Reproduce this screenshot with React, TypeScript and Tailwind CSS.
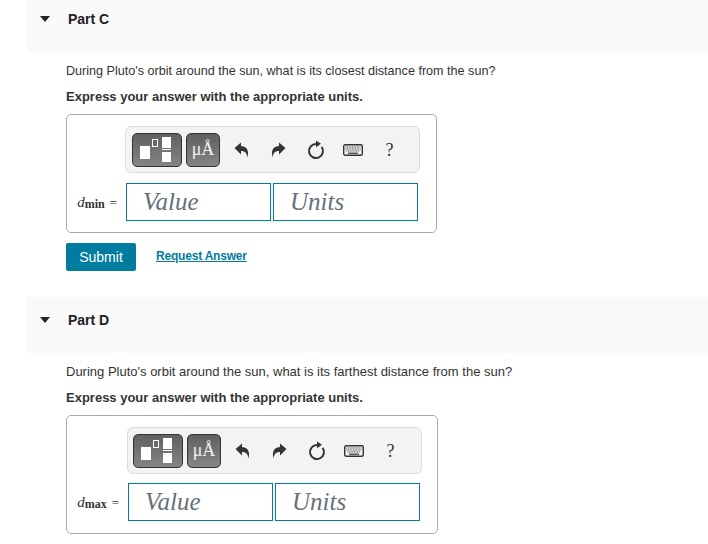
import React from "react";

const Tool = ({ children, w }: { children: React.ReactNode; w: string }) => (
  <div className={`flex justify-center items-center w-[37px] ${w}`}>{children}</div>
);

function Toolbar({ pad }: { pad: string }) {
  return (
    <div className={`flex items-center h-[47px] w-[295px] bg-[#f3f3f3] border border-[#dddddd] rounded-[6px] ${pad}`}>
      <div className="relative w-[50px] h-[34px] rounded-[5px] border border-[#333333] bg-gradient-to-b from-[#606060] to-[#858585]">
        <div className="absolute left-[7px] top-[12px] w-[10px] h-[13px] bg-white" />
        <div className="absolute left-[19px] top-[5px] w-[6px] h-[8px] border border-white" />
        <div className="absolute left-[29px] top-[3px] w-[9px] h-[11px] bg-white" />
        <div className="absolute left-[29px] top-[15px] w-[9px] h-px bg-white" />
        <div className="absolute left-[29px] top-[18px] w-[9px] h-[10px] bg-white" />
      </div>
      <div className="ml-[4px] w-[34px] h-[34px] rounded-[5px] border border-[#333333] bg-gradient-to-b from-[#606060] to-[#858585] flex items-center justify-center text-[#f2f2f2] text-[18px] font-['Liberation_Serif',serif]">
        μÅ
      </div>
      <Tool w="ml-[3px]">
        <svg width="15" height="16" viewBox="0 0 15 16">
          <path d="M0.500 6 7 0.500v3.500c4.500 0.200 7.500 3 7 8.500l-0.700 3c-0.300-4.500-2.300-6.500-6.300-6.500V12.500z" fill="#333333" />
        </svg>
      </Tool>
      <Tool w="">
        <svg width="15" height="16" viewBox="0 0 15 16">
          <path d="M14.500 6 8 0.500v3.500c-4.500 0.200-7.500 3-7 8.500l0.700 3c0.300-4.500 2.300-6.500 6.300-6.500V12.500z" fill="#333333" />
        </svg>
      </Tool>
      <Tool w="">
        <svg width="18" height="20" viewBox="0 0 18 20">
          <path d="M9 4a7 7 0 1 0 5.600 2.800" fill="none" stroke="#333333" strokeWidth="2" />
          <path d="M9 0.500 14 3.800 9 7.200z" fill="#333333" />
        </svg>
      </Tool>
      <Tool w="">
        <svg width="20" height="12" viewBox="0 0 20 12">
          <rect x="0.700" y="0.700" width="18.600" height="10.600" rx="1.500" fill="#f3f3f3" stroke="#333333" strokeWidth="1.400" />
          <path d="M2.500 3h15M2.500 5h15M3.500 7h13" stroke="#444444" strokeWidth="1.200" strokeDasharray="1 .6" />
          <path d="M5 9.200h10" stroke="#333333" strokeWidth="1.200" />
        </svg>
      </Tool>
      <Tool w="">
        <span className="text-[18px] leading-none text-[#333333] font-['Liberation_Serif',serif]">?</span>
      </Tool>
    </div>
  );
}

function Field({ text, w }: { text: string; w: string }) {
  return (
    <div className={`${w} h-[38px] border border-[#007c9e] bg-white flex items-center pl-[16px] text-[25px] italic text-[#66707a] font-['Liberation_Serif',serif]`}>
      {text}
    </div>
  );
}

function AnswerBox({ sub, shift, pad, gap, labelW, className }: { sub: string; shift: string; pad: string; gap: string; labelW: string; className: string }) {
  return (
    <div className={`h-[119px] border border-[#aaaaaa] rounded-[5px] ${className}`}>
      <div className={`mt-[11px] ${shift}`}>
        <Toolbar pad={pad} />
      </div>
      <div className={`flex items-center ${gap}`}>
        <div className={`${labelW} flex justify-end items-center pr-[9px] text-[#333333] font-['Liberation_Serif',serif]`}>
          <span className="italic text-[15px] leading-none">d</span>
          <span className="font-bold text-[12px] leading-none mt-[4px]">{sub}</span>
          <span className="text-[13px] leading-none ml-[5px]">=</span>
        </div>
        <Field text="Value" w="w-[145px]" />
        <Field text="Units" w="ml-[2px] w-[145px]" />
      </div>
    </div>
  );
}

function Header({ title, className }: { title: string; className: string }) {
  return (
    <div className="flex items-start">
      <div className={`ml-[26px] flex-1 bg-[#f9f9f9] flex items-start ${className}`}>
        <div className="ml-[14px] mt-[4px] w-0 h-0 border-x-[5px] border-x-transparent border-t-[6px] border-t-[#222222]" />
        <div className="ml-[18px] text-[14px] leading-[15px] font-bold text-[#222222]">{title}</div>
      </div>
    </div>
  );
}

function Question({ text, size }: { text: string; size: string }) {
  return (
    <div className="ml-[66px]">
      <p className={`${size} leading-[16px] text-[#333333] pt-[1px]`}>{text}</p>
      <p className="mt-[10px] text-[13px] leading-[16px] font-bold text-[#333333]">Express your answer with the appropriate units.</p>
    </div>
  );
}

export default function App() {
  return (
    <div className="w-[708px] h-[544px] overflow-hidden bg-white font-['Liberation_Sans',Arial,sans-serif]">
      <Header title="Part C" className="h-[52px] pt-[12px]" />
      <div className="mt-[10px]">
        <Question size="text-[12.600px]" text="During Pluto's orbit around the sun, what is its closest distance from the sun?" />
      </div>
      <AnswerBox sub="min" shift="ml-[58px]" pad="pl-[6px]" gap="mt-[10px]" labelW="w-[59px]" className="w-[371px] ml-[66px] mt-[9px]" />
      <div className="ml-[66px] mt-[10px] flex items-center">
        <div className="w-[70px] h-[28px] bg-[#007c9e] rounded-[2px] text-white text-[14px] flex items-center justify-center">Submit</div>
        <a className="ml-[20px] text-[12px] tracking-[-0.2px] font-bold text-[#007c9e] underline mt-[-2px]">Request Answer</a>
      </div>
      <div className="mt-[26px]">
        <Header title="Part D" className="h-[56px] pt-[16px]" />
      </div>
      <div className="mt-[10px]">
        <Question size="text-[13px]" text="During Pluto's orbit around the sun, what is its farthest distance from the sun?" />
      </div>
      <AnswerBox sub="max" shift="ml-[60px]" pad="pl-[5px]" gap="mt-[9px]" labelW="w-[61px]" className="w-[372px] ml-[66px] mt-[9px]" />
    </div>
  );
}
